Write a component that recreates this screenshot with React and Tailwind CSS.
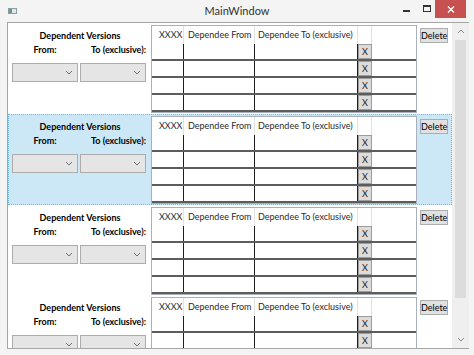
import clsx from 'clsx';

function Chevron({ up = false, down = false, className }) {
  const d = up ? 'M1 4 L4 1 L7 4' : 'M1 1 L4 4 L7 1';
  return (
    <svg width="8" height="5" viewBox="0 0 8 5" className={className}>
      <path d={d} fill="none" stroke={down || up ? '#8a8a8a' : '#707070'} strokeWidth="1" />
    </svg>
  );
}

function Combo() {
  return (
    <div className="w-[66px] h-[19px] border border-[#acacac] bg-[#e5e5e5] flex items-center justify-end pr-[4px]">
      <Chevron />
    </div>
  );
}

function Grid() {
  return (
    <div className="mt-[1px] w-[266px] h-[88px] shrink-0 border border-[#a9b0bb] bg-white flex flex-col overflow-hidden">
      <div className="h-[18px] shrink-0 flex text-[9px] leading-[18px] text-[#2a2a2a] whitespace-nowrap">
        <div className="w-[32px] pl-[7px] border-r border-[#e2e2e2] overflow-hidden">XXXX</div>
        <div className="w-[71px] pl-[4px] border-r border-[#e2e2e2] overflow-hidden">Dependee From</div>
        <div className="w-[103px] pl-[3px] border-r border-[#e2e2e2] overflow-hidden">Dependee To (exclusive)</div>
        <div className="w-[14px] border-r border-[#e2e2e2]" />
        <div className="flex-1" />
      </div>
      {[0, 1, 2, 3].map((i) => (
        <div key={i} className="h-[17px] shrink-0 flex border-b-2 border-[#5c5c5c]">
          <div className="w-[32px] border-r border-[#1f1f1f]" />
          <div className="w-[71px] border-r border-[#1f1f1f]" />
          <div className="w-[103px] border-r border-[#1f1f1f]" />
          <button className="w-[14px] h-[15px] border border-[#9c9c9c] bg-[#dcdcdc] text-[9px] leading-[13px] text-[#222] text-center">
            X
          </button>
          <div className="flex-1" />
        </div>
      ))}
    </div>
  );
}

function Item({ selected, short }) {
  return (
    <div
      className={clsx(
        'shrink-0 flex border',
        short ? 'h-[90px]' : 'h-[91px]',
        selected ? 'border-dotted border-[#72b9df] bg-[#cce8f7]' : 'border-transparent'
      )}
    >
      <div className="w-[142px] shrink-0 flex flex-col pt-[6px] text-[9px] leading-[12px] font-bold text-black">
        <div className="text-center">Dependent Versions</div>
        <div className="flex gap-[2px] mt-[2px] pl-[3px] whitespace-nowrap">
          <div className="w-[66px] text-center">From:</div>
          <div className="w-[66px] text-right">To (exclusive):</div>
        </div>
        <div className="flex gap-[2px] mt-[7px] pl-[3px]">
          <Combo />
          <Combo />
        </div>
      </div>
      <Grid />
      <button className="ml-[3px] mt-[4px] w-[28px] h-[15px] shrink-0 border border-[#adadad] bg-[#e1e1e1] text-[9px] leading-[13px] text-black text-center">
        Delete
      </button>
    </div>
  );
}

export default function App() {
  return (
    <div className="w-[474px] h-[355px] bg-[#f4f4f4] flex flex-col overflow-hidden font-['Lato',sans-serif]">
      {/* title bar */}
      <div className="h-[22px] shrink-0 grid grid-cols-[1fr_auto_1fr]">
        <div className="flex items-center pl-[8px]">
          <div className="w-[9px] h-[6px] border border-[#8e9ca3] bg-[#dfe8eb] flex">
            <div className="w-[3px] h-full bg-[#6a9a8f]" />
          </div>
        </div>
        <div className="text-[11px] leading-[22px] text-[#333]">MainWindow</div>
        <div className="flex justify-end items-start pr-[8px]">
          <div className="w-[23px] h-[18px] flex items-center justify-center pt-[3px]">
            <div className="w-[7px] h-[2px] bg-[#333]" />
          </div>
          <div className="w-[17px] h-[18px] flex items-center justify-center pb-[2px]">
            <div className="w-[8px] h-[7px] border border-t-2 border-[#333]" />
          </div>
          <div className="w-[31px] h-[18px] bg-[#c75050] flex items-center justify-center">
            <svg width="8" height="7" viewBox="0 0 8 7">
              <path d="M1 0.5 L7 6.5 M7 0.5 L1 6.5" stroke="#fff" strokeWidth="1.4" />
            </svg>
          </div>
        </div>
      </div>

      {/* client area */}
      <div className="ml-[7px] w-[462px] h-[327px] shrink-0 border border-r-0 border-[#a6a6a6] bg-white flex">
        <div className="flex-1 flex flex-col overflow-hidden">
          <Item />
          <Item selected />
          <Item short />
          <Item />
        </div>
        <div className="w-[17px] shrink-0 bg-[#efefef] flex flex-col">
          <div className="h-[17px] flex items-center justify-center">
            <Chevron up />
          </div>
          <div className="flex-1 px-[3px]">
            <div className="h-[258px] bg-[#dcdcdc]" />
          </div>
          <div className="h-[17px] flex items-center justify-center">
            <Chevron down />
          </div>
        </div>
      </div>
    </div>
  );
}
